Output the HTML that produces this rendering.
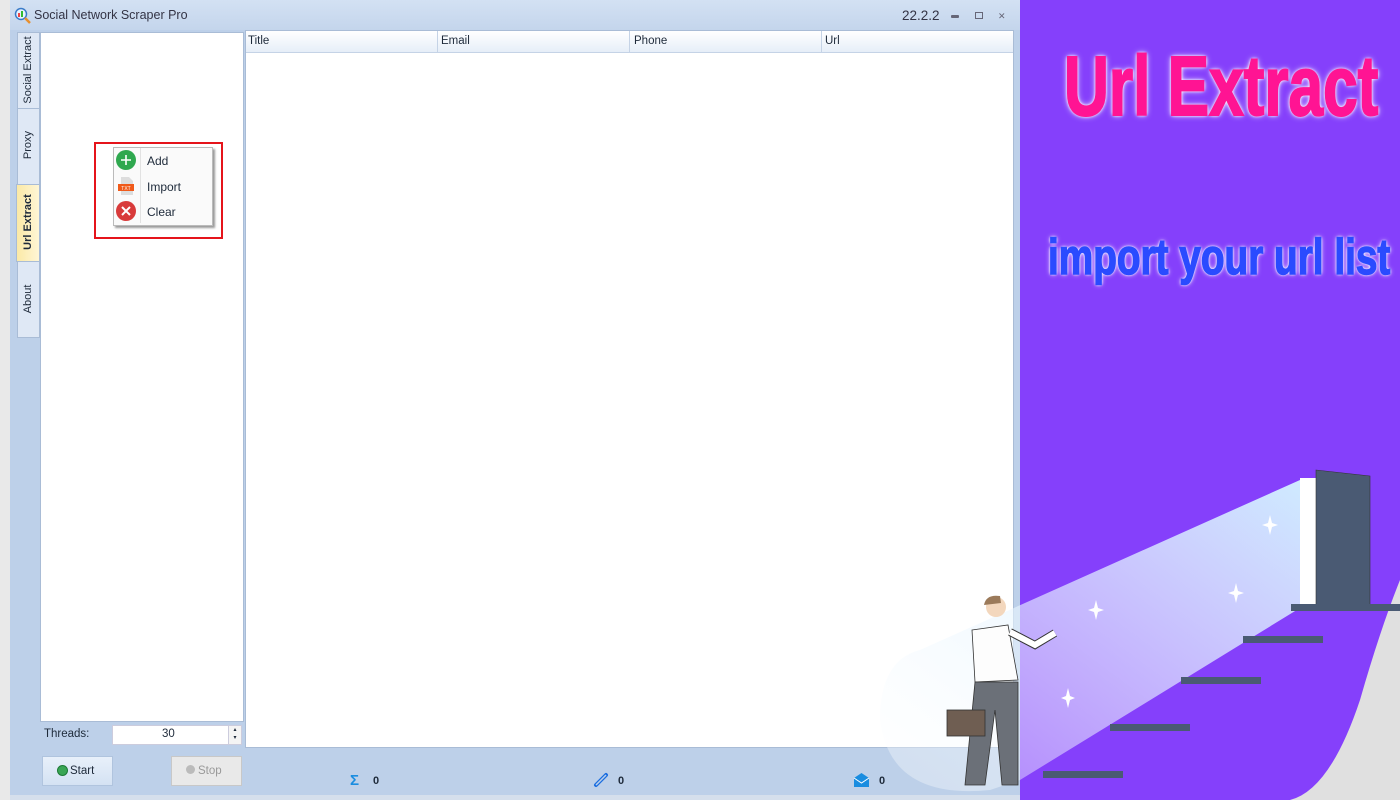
<!DOCTYPE html>
<html><head><meta charset="utf-8"><style>
body{margin:0;width:1400px;height:800px;overflow:hidden;position:relative;background:#e9e9e9;font-family:"Liberation Sans",sans-serif;font-size:11.5px;color:#1e2a3a}
.a{position:absolute}
.big{font-family:"Liberation Sans Narrow","Liberation Sans",sans-serif;font-weight:bold;white-space:nowrap;transform-origin:0 0}
</style></head><body>
<div class="a" style="left:10px;top:0;width:1010px;height:800px;background:#bdd0e9"></div>
<div class="a" style="left:10px;top:0;width:1010px;height:30px;background:linear-gradient(#d3e1f3,#c4d5ec)"></div>
<svg class="a" style="left:14px;top:7px" width="18" height="18"><circle cx="7" cy="7" r="5.5" fill="#e9f3ff" stroke="#3a7bc8" stroke-width="1.5"/><rect x="4" y="6" width="2" height="4" fill="#e44"/><rect x="7" y="4" width="2" height="6" fill="#3b3"/><line x1="11" y1="11" x2="16" y2="16" stroke="#e89030" stroke-width="2.5"/></svg>
<div class="a" style="left:34px;top:8px;font-size:12.5px;color:#334">Social Network Scraper Pro</div>
<div class="a" style="left:902px;top:8px;font-size:13.5px;color:#334">22.2.2</div>
<div class="a" style="left:951px;top:15px;width:8px;height:3px;background:#667;border-radius:1px"></div>
<div class="a" style="left:975px;top:12px;width:6px;height:5px;border:1px solid #667"></div>
<div class="a" style="left:998px;top:11px;font-size:9px;color:#667">✕</div>
<div class="a" style="left:17px;top:32px;width:21px;height:75px;background:#dfe8f5;border:1px solid #a9bcd6"></div>
<div class="a" style="left:17px;top:108px;width:21px;height:75px;background:#dfe8f5;border:1px solid #a9bcd6"></div>
<div class="a" style="left:16px;top:184px;width:22px;height:76px;background:linear-gradient(90deg,#fbe9a6,#fff6d6);border:1px solid #a9bcd6"></div>
<div class="a" style="left:17px;top:261px;width:21px;height:75px;background:#dfe8f5;border:1px solid #a9bcd6"></div>
<div class="a" style="left:28px;top:70px;transform:translate(-50%,-50%) rotate(-90deg);white-space:nowrap;font-size:11px">Social Extract</div>
<div class="a" style="left:28px;top:145px;transform:translate(-50%,-50%) rotate(-90deg);white-space:nowrap;font-size:11px">Proxy</div>
<div class="a" style="left:28px;top:222px;transform:translate(-50%,-50%) rotate(-90deg);white-space:nowrap;font-weight:bold;font-size:11px">Url Extract</div>
<div class="a" style="left:28px;top:299px;transform:translate(-50%,-50%) rotate(-90deg);white-space:nowrap;font-size:11px">About</div>
<div class="a" style="left:40px;top:32px;width:202px;height:688px;background:#fff;border:1px solid #a9bcd6"></div>
<div class="a" style="left:94px;top:142px;width:125px;height:93px;border:2px solid #e5141b"></div>
<div class="a" style="left:113px;top:147px;width:98px;height:77px;background:#fafafa;border:1px solid #bbb;box-shadow:2px 2px 2px #999"></div>
<div class="a" style="left:140px;top:148px;width:1px;height:75px;background:#e2e2e2"></div>
<svg class="a" style="left:116px;top:150px" width="22" height="72"><circle cx="10" cy="10" r="10" fill="#2fa84f"/><path d="M10 5v10M5 10h10" stroke="#fff" stroke-width="1.6"/><path d="M5 27h8l4 4v14H5z" fill="#ddd"/><rect x="2" y="34" width="16" height="7" fill="#f05a1a"/><text x="10" y="40" font-size="5" fill="#fff" text-anchor="middle" font-family="Liberation Sans">TXT</text><circle cx="10" cy="61" r="10" fill="#d83a3a"/><path d="M6 57l8 8M14 57l-8 8" stroke="#fff" stroke-width="2"/></svg>
<div class="a" style="left:147px;top:154px;font-size:12px">Add</div>
<div class="a" style="left:147px;top:180px;font-size:12px">Import</div>
<div class="a" style="left:147px;top:205px;font-size:12px">Clear</div>
<div class="a" style="left:44px;top:728px">Threads:</div>
<div class="a" style="left:112px;top:725px;width:116px;height:18px;background:#fff;border:1px solid #ccd"></div>
<div class="a" style="left:162px;top:728px">30</div>
<div class="a" style="left:228px;top:725px;width:12px;height:18px;background:#f4f4f4;border:1px solid #ccd;font-size:6px;line-height:8px;text-align:center">▴<br>▾</div>
<div class="a" style="left:42px;top:756px;width:69px;height:28px;background:linear-gradient(#e8f0fa,#d4e2f3);border:1px solid #b0c4de"></div>
<div class="a" style="left:57px;top:765px;width:9px;height:9px;border-radius:50%;background:#3aa655;border:1px solid #1d7a36"></div>
<div class="a" style="left:70px;top:765px">Start</div>
<div class="a" style="left:171px;top:756px;width:69px;height:28px;background:#e9e9e9;border:1px solid #c8c8c8"></div>
<div class="a" style="left:186px;top:765px;width:9px;height:9px;border-radius:50%;background:#bbb"></div>
<div class="a" style="left:198px;top:765px;color:#999">Stop</div>
<div class="a" style="left:245px;top:30px;width:769px;height:718px;background:#fff;border:1px solid #a9bcd6;box-sizing:border-box"></div>
<div class="a" style="left:246px;top:31px;width:767px;height:21px;background:linear-gradient(#fff,#e6eef8);border-bottom:1px solid #c5d3e6"></div>
<div class="a" style="left:248px;top:35px">Title</div><div class="a" style="left:437px;top:31px;width:1px;height:21px;background:#c5d3e6"></div>
<div class="a" style="left:441px;top:35px">Email</div><div class="a" style="left:629px;top:31px;width:1px;height:21px;background:#c5d3e6"></div>
<div class="a" style="left:634px;top:35px">Phone</div><div class="a" style="left:821px;top:31px;width:1px;height:21px;background:#c5d3e6"></div>
<div class="a" style="left:825px;top:35px">Url</div>
<div class="a" style="left:350px;top:772px;color:#1a8de0;font-size:15px;font-weight:bold">Σ</div><div class="a" style="left:373px;top:775px;font-weight:bold;font-size:11px">0</div>
<svg class="a" style="left:593px;top:772px" width="16" height="16"><path d="M3 13 L13 3" stroke="#1a6de0" stroke-width="4" stroke-linecap="round" fill="none"/><path d="M3 13 L13 3" stroke="#bdd0e9" stroke-width="1.5" fill="none"/></svg><div class="a" style="left:618px;top:775px;font-weight:bold;font-size:11px">0</div>
<svg class="a" style="left:853px;top:772px" width="17" height="16"><path d="M1 6 L8.5 1 L16 6 V15 H1Z" fill="#1a8de0"/><path d="M1 6 L8.5 11 L16 6" stroke="#fff" fill="none"/></svg><div class="a" style="left:879px;top:775px;font-weight:bold;font-size:11px">0</div>
<div class="a" style="left:10px;top:795px;width:1010px;height:5px;background:#d5dfec"></div>
<div class="a" style="left:1020px;top:0;width:380px;height:800px;background:#8540fb"></div>
<svg class="a" style="left:860px;top:460px" width="540" height="340">
<path d="M540 120 Q520 170 500 240 Q470 330 430 340 L540 340Z" fill="#e0e0e0"/>
<defs><linearGradient id="g" x1="0" y1="1" x2="1" y2="0"><stop offset="0" stop-color="#fff" stop-opacity=".3"/><stop offset="1" stop-color="#cfeaff"/></linearGradient></defs>
<path d="M440 20 L440 148 L160 320 L130 330 Q30 340 20 260 Q20 200 60 190 Z" fill="url(#g)"/>
<rect x="440" y="18" width="16" height="128" fill="#fff"/>
<path d="M456 10 L510 16 L510 146 L456 146Z" fill="#4a5a73" stroke="#333" stroke-width=".6"/>
<rect x="431" y="144" width="109" height="7" fill="#4a5a73"/>
<rect x="383" y="176" width="80" height="7" fill="#4a5a73"/>
<rect x="321" y="217" width="80" height="7" fill="#4a5a73"/>
<rect x="250" y="264" width="80" height="7" fill="#4a5a73"/>
<rect x="183" y="311" width="80" height="7" fill="#4a5a73"/>
<g fill="#fff"><path d="M410 55 l2 8 l6 2 l-6 2 l-2 8 l-2 -8 l-6 -2 l6 -2z"/><path d="M376 123 l2 8 l6 2 l-6 2 l-2 8 l-2 -8 l-6 -2 l6 -2z"/><path d="M236 140 l2 8 l6 2 l-6 2 l-2 8 l-2 -8 l-6 -2 l6 -2z"/><path d="M208 228 l2 8 l5 2 l-5 2 l-2 8 l-2 -8 l-5 -2 l5 -2z"/></g>
<circle cx="136" cy="147" r="10" fill="#f3d7bd"/><path d="M124 145 Q126 134 140 136 L141 143 Z" fill="#9b7a5a"/>
<path d="M112 170 L148 165 L158 220 L115 222Z" fill="#fdfdfd" stroke="#333" stroke-width=".8"/>
<path d="M150 172 L175 185 L195 173" stroke="#333" stroke-width="8" fill="none"/>
<path d="M150 172 L175 185 L195 173" stroke="#fff" stroke-width="6" fill="none"/>
<path d="M115 222 L158 222 L158 325 L142 325 L135 250 L125 325 L105 325Z" fill="#6b7078" stroke="#333" stroke-width=".8"/>
<rect x="87" y="250" width="38" height="26" fill="#6f5e52" stroke="#333" stroke-width=".8"/>
</svg>
<div class="a big" style="left:1064px;top:38px;font-size:84px;color:#ff1493;transform:scaleX(.74);-webkit-text-stroke:2px #ff1493;text-shadow:0 0 4px #fff,0 0 4px #fff,0 0 8px #fff">Url Extract</div>
<div class="a big" style="left:1048px;top:228px;font-size:50px;color:#2a4bff;transform:scaleX(.775);-webkit-text-stroke:1.5px #2a4bff;text-shadow:0 0 3px #fff,0 0 3px #fff,0 0 6px #fff">import your url list</div>
</body></html>
